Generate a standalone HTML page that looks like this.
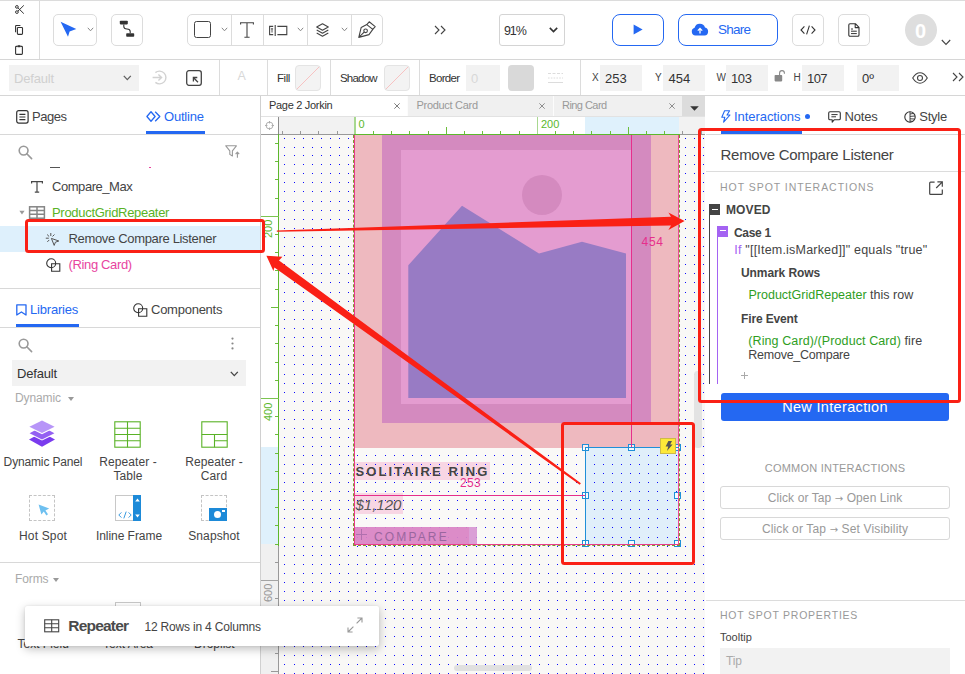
<!DOCTYPE html>
<html>
<head>
<meta charset="utf-8">
<title>Axure RP - Remove Compare Listener</title>
<style>
*{box-sizing:border-box;margin:0;padding:0}
html,body{width:965px;height:674px;overflow:hidden;background:#fff}
body{font-family:"Liberation Sans",sans-serif;font-size:13px;color:#333;position:relative}
.a{position:absolute}
.t{position:absolute;white-space:nowrap;line-height:1}
svg{position:absolute;overflow:visible}
/* top toolbar */
#top{left:0;top:0;width:965px;height:60px;background:#fff;border-top:1px solid #dcdcdc;border-bottom:1px solid #d6d6d6}
#bar2{left:0;top:60px;width:965px;height:36px;background:#fff;border-bottom:1px solid #d6d6d6}
.btn{position:absolute;border:1px solid #dcdcdc;border-radius:5px;background:#fff}
.vd{position:absolute;width:1px;background:#dcdcdc}
.inp{position:absolute;background:#f2f2f2;height:26px;top:65px}
.sw{top:65px;width:26px;height:26px;background:#f3f3f3 linear-gradient(to bottom right,transparent calc(50% - 0.55px),#f7c2c2 calc(50% - 0.55px),#f7c2c2 calc(50% + 0.55px),transparent calc(50% + 0.55px));border:1px solid #e4e4e4;border-radius:4px}
.vl{font-size:11px;transform-origin:0 0;transform:rotate(-90deg)}
.h{position:absolute;width:7px;height:7px;background:rgba(255,255,255,.75);border:1px solid #1f8fd8}
#surf{background:#f9f8f6}
.rr{border:3px solid #fa2015;border-radius:3.5px}
.ar{font-family:"DejaVu Sans",sans-serif;font-size:10px;letter-spacing:0}
/* left */
#left{left:0;top:96px;width:261px;height:578px;background:#fff;border-right:1px solid #d0d0d0}
/* canvas */
#cv{left:261px;top:96px;width:444px;height:578px;background:#f9f7f6;overflow:hidden}
/* right */
#right{left:704.4px;top:96px;width:260.6px;height:578px;background:#fff;border-left:1px solid #e6e6e6}
</style>
</head>
<body>
<div id="top" class="a"></div>
<div id="bar2" class="a"></div>
<div id="left" class="a"></div>
<div id="cv" class="a"></div>
<div id="right" class="a"></div>
<!-- top toolbar contents -->
<svg style="left:15px;top:5px" width="9" height="9" viewBox="0 0 9 9" fill="none" stroke="#333" stroke-width="1"><circle cx="1.9" cy="1.9" r="1.35"/><circle cx="1.9" cy="7.1" r="1.35"/><path d="M2.9 2.8 L8.8 8.6 M2.9 6.2 L8.8 0.4"/></svg>
<svg style="left:15px;top:25px" width="8" height="10" viewBox="0 0 8 10" fill="none" stroke="#333" stroke-width="1.1"><rect x="2.4" y="2.5" width="5.1" height="6.9" rx="0.8"/><path d="M0.6 7.2 V1.2 Q0.6 0.55 1.2 0.55 H5.4"/></svg>
<svg style="left:15px;top:45px" width="8" height="10" viewBox="0 0 8 10" fill="none" stroke="#333" stroke-width="1.1"><path d="M2.4 1.4 H1.4 Q0.6 1.4 0.6 2.2 V8.6 Q0.6 9.4 1.4 9.4 H6.6 Q7.4 9.4 7.4 8.6 V2.2 Q7.4 1.4 6.6 1.4 H5.6"/><path d="M2.6 1.9 V1 Q2.6 0.5 3.1 0.5 H4.9 Q5.4 0.5 5.4 1 V1.9 Z" fill="#333" stroke-width="0.6"/></svg>
<div class="vd" style="left:39px;top:1px;height:58px"></div>
<div class="btn" style="left:53px;top:14px;width:44px;height:32px"></div>
<svg style="left:60px;top:21px" width="17" height="17" viewBox="0 0 17 17"><path d="M0.6 0.7 L16.3 8 L9.6 10.5 L8 15.8 Z" fill="#2468f2"/></svg>
<svg style="left:87px;top:27px" width="7" height="5" viewBox="0 0 7 5" fill="none" stroke="#888" stroke-width="1"><path d="M0.8 0.8 L3.5 3.8 L6.2 0.8"/></svg>
<div class="btn" style="left:111px;top:14px;width:32px;height:32px"></div>
<svg style="left:119px;top:20px" width="16" height="18" viewBox="0 0 16 18"><rect x="0.8" y="0.8" width="8" height="3.6" rx="0.8" fill="#333"/><rect x="7.2" y="13.2" width="8" height="3.6" rx="0.8" fill="#333"/><path d="M4.8 4.4 V6.5 Q4.8 9 8 9 Q11.2 9 11.2 11.4 V13.2" fill="none" stroke="#333" stroke-width="1.1"/></svg>
<div class="btn" style="left:187px;top:14px;width:196px;height:32px"></div>
<div class="vd" style="left:231px;top:15px;height:30px"></div>
<div class="vd" style="left:263px;top:15px;height:30px"></div>
<div class="vd" style="left:307px;top:15px;height:30px"></div>
<div class="vd" style="left:351px;top:15px;height:30px"></div>
<div class="a" style="left:194px;top:21px;width:17px;height:17px;border:1.5px solid #444;border-radius:2.5px"></div>
<svg style="left:221px;top:27px" width="7" height="5" viewBox="0 0 7 5" fill="none" stroke="#888" stroke-width="1"><path d="M0.8 0.8 L3.5 3.8 L6.2 0.8"/></svg>
<svg style="left:240px;top:22px" width="14" height="16" viewBox="0 0 14 16" fill="none" stroke="#444" stroke-width="1.1"><path d="M0.6 2.6 V0.7 H13.4 V2.6 M7 0.7 V15.2 M4.4 15.3 H9.6"/></svg>
<svg style="left:269px;top:25px" width="19" height="11" viewBox="0 0 19 11" fill="none" stroke="#444" stroke-width="1.1"><path d="M6.2 0 V11 M4.2 1.4 H0.6 V9.6 H4.2 M8.4 1.4 H17.8 V9.6 H8.4"/><path d="M1.9 3.8 H4.1 M3 3.8 V7.6" stroke-width="0.9"/></svg>
<svg style="left:297px;top:27px" width="7" height="5" viewBox="0 0 7 5" fill="none" stroke="#888" stroke-width="1"><path d="M0.8 0.8 L3.5 3.8 L6.2 0.8"/></svg>
<svg style="left:316px;top:23px" width="13" height="14" viewBox="0 0 13 14" fill="none" stroke="#444" stroke-width="1.1" stroke-linejoin="round"><path d="M6.5 0.7 L12.3 4 L6.5 7.3 L0.7 4 Z M0.7 7 L6.5 10.3 L12.3 7 M0.7 9.9 L6.5 13.2 L12.3 9.9"/></svg>
<svg style="left:341px;top:27px" width="7" height="5" viewBox="0 0 7 5" fill="none" stroke="#888" stroke-width="1"><path d="M0.8 0.8 L3.5 3.8 L6.2 0.8"/></svg>
<svg style="left:358px;top:21px" width="18" height="18" viewBox="0 0 18 18" fill="none" stroke="#444" stroke-width="1.1" stroke-linejoin="round"><path d="M11.2 0.8 L17.2 5.6 L14.8 8.4 L8.8 3.6 Z M8.8 3.6 L3.2 6.4 L0.8 16.4 L11 13.6 L14.8 8.4 M0.8 16.4 L6.4 10.8"/><circle cx="7.6" cy="9.8" r="1.8"/></svg>
<svg style="left:434px;top:25px" width="13" height="10" viewBox="0 0 13 10" fill="none" stroke="#444" stroke-width="1.1"><path d="M1 1 L5 5 L1 9 M7 1 L11 5 L7 9"/></svg>
<div class="btn" style="left:499px;top:14px;width:66px;height:32px;border-radius:3px;border-color:#d4d4d4"></div>
<div class="t" style="left:504px;top:24.5px;font-size:12.5px;letter-spacing:-1.1px;color:#333">91%</div>
<svg style="left:549px;top:27px" width="9" height="6" viewBox="0 0 9 6" fill="none" stroke="#333" stroke-width="1.6"><path d="M0.8 0.9 L4.5 4.6 L8.2 0.9"/></svg>
<div class="btn" style="left:612px;top:14px;width:52px;height:32px;border-color:#2468f2;border-radius:8px"></div>
<svg style="left:633px;top:24px" width="10" height="11" viewBox="0 0 10 11"><path d="M0.6 0.6 L9.6 5.5 L0.6 10.4 Z" fill="#2468f2"/></svg>
<div class="btn" style="left:678px;top:14px;width:100px;height:32px;border-color:#2468f2;border-radius:8px"></div>
<svg style="left:691px;top:23px" width="18" height="13" viewBox="0 0 18 13"><path d="M4.4 12.6 A4 4 0 0 1 3.6 4.8 A5.4 5.4 0 0 1 14 4.4 A4.2 4.2 0 0 1 13.6 12.6 Z" fill="#2468f2"/><path d="M9 10.4 V5.6 M6.8 7.6 L9 5.4 L11.2 7.6" fill="none" stroke="#fff" stroke-width="1.3"/></svg>
<div class="t" style="left:718px;top:22.8px;font-size:13.5px;letter-spacing:-0.75px;color:#2468f2">Share</div>
<div class="btn" style="left:792px;top:14px;width:32px;height:32px"></div>
<svg style="left:800px;top:25px" width="16" height="10" viewBox="0 0 16 10" fill="none" stroke="#333" stroke-width="1.1"><path d="M4.4 1.4 L1 5 L4.4 8.6 M11.6 1.4 L15 5 L11.6 8.6 M9.4 0.6 L6.6 9.4"/></svg>
<div class="btn" style="left:838px;top:14px;width:32px;height:32px"></div>
<svg style="left:848px;top:23px" width="12" height="14" viewBox="0 0 12 14" fill="none" stroke="#333" stroke-width="1.1" stroke-linejoin="round"><path d="M0.8 2 Q0.8 0.7 2 0.7 H7.4 L11 4.4 V12 Q11 13.3 9.8 13.3 H2 Q0.8 13.3 0.8 12 Z M7.2 0.8 V4.6 H11"/><path d="M3 6 H5 M3 8.2 H8.8 M3 10.6 H8.8" stroke-width="1"/></svg>
<div class="a" style="left:905px;top:14px;width:32px;height:32px;border-radius:50%;background:#dedede"></div>
<div class="t" style="left:915px;top:20.5px;font-size:20px;font-weight:bold;color:#fff">0</div>
<svg style="left:941px;top:39px" width="10" height="7" viewBox="0 0 10 7" fill="none" stroke="#444" stroke-width="1.1"><path d="M0.8 1 L5 5.4 L9.2 1"/></svg>

<!-- style toolbar contents -->
<div class="inp" style="left:9px;width:130px"></div>
<div class="t" style="left:14px;top:72px;font-size:13px;letter-spacing:-0.2px;color:#d0d0d0">Default</div>
<svg style="left:123px;top:75px" width="9" height="6" viewBox="0 0 9 6" fill="none" stroke="#606060" stroke-width="1.3"><path d="M0.8 0.9 L4.3 4.6 L7.8 0.9"/></svg>
<svg style="left:152px;top:70px" width="15" height="15" viewBox="0 0 15 15" fill="none" stroke="#d2d2d2" stroke-width="1.4"><path d="M3.4 2.6 A6.4 6.4 0 1 1 3.4 12.4"/><path d="M0.6 7.5 H9.4 M6.4 4.4 L9.6 7.5 L6.4 10.6"/></svg>
<svg style="left:186px;top:70px" width="16" height="16" viewBox="0 0 16 16" fill="none" stroke="#444" stroke-width="1.3"><rect x="0.7" y="0.7" width="14.6" height="14.6" rx="2.2"/><path d="M12 12.2 L7.6 7.8 M7.4 11.4 V7.5 H11.3" stroke-width="1.3"/></svg>
<div class="vd" style="left:219px;top:60px;height:35px"></div>
<div class="t" style="left:237.5px;top:69.6px;font-size:12.5px;color:#d8d8d8">A</div>
<div class="vd" style="left:267px;top:60px;height:35px"></div>
<div class="t" style="left:277px;top:72.5px;font-size:11.5px;letter-spacing:-0.45px;color:#333">Fill</div>
<div class="a sw" style="left:295px"></div>
<div class="vd" style="left:330px;top:60px;height:35px"></div>
<div class="t" style="left:340px;top:72.5px;font-size:11.5px;letter-spacing:-0.8px;color:#333">Shadow</div>
<div class="a sw" style="left:384px"></div>
<div class="vd" style="left:419px;top:60px;height:35px"></div>
<div class="t" style="left:429px;top:72.5px;font-size:11.5px;letter-spacing:-0.7px;color:#333">Border</div>
<div class="inp" style="left:466px;width:34px"></div>
<div class="t" style="left:471px;top:72px;font-size:13px;color:#d8d8d8">0</div>
<div class="a" style="left:508px;top:65px;width:26px;height:26px;background:#d9d9d9;border-radius:4px"></div>
<svg style="left:548px;top:72px" width="15" height="12" viewBox="0 0 15 12" fill="none" stroke="#dcdcdc" stroke-width="1"><path d="M0 1.5 H15" stroke-dasharray="3 1.5"/><path d="M0 6 H15" stroke-dasharray="1.6 1.2"/><path d="M0 10.5 H15"/></svg>
<div class="vd" style="left:580px;top:60px;height:35px"></div>
<div class="t" style="left:592px;top:73px;font-size:10px;color:#444">X</div>
<div class="inp" style="left:600px;width:42px"></div>
<div class="t" style="left:605px;top:72px;font-size:13px;color:#333">253</div>
<div class="t" style="left:655px;top:73px;font-size:10px;color:#444">Y</div>
<div class="inp" style="left:663px;width:42px"></div>
<div class="t" style="left:668.5px;top:72px;font-size:13px;color:#333">454</div>
<div class="t" style="left:716.5px;top:73px;font-size:10px;color:#444">W</div>
<div class="inp" style="left:726px;width:42px"></div>
<div class="t" style="left:731px;top:72px;font-size:13px;letter-spacing:-0.4px;color:#333">103</div>
<svg style="left:774px;top:70px" width="12" height="12" viewBox="0 0 12 12"><rect x="0.6" y="5" width="7.6" height="6.4" rx="0.8" fill="#888"/><path d="M5.6 5 V3 A2.4 2.4 0 0 1 10.4 3 V3.8" fill="none" stroke="#888" stroke-width="1.1"/></svg>
<div class="t" style="left:793.5px;top:73px;font-size:10px;color:#444">H</div>
<div class="inp" style="left:802px;width:42px"></div>
<div class="t" style="left:807px;top:72px;font-size:13px;letter-spacing:-0.6px;color:#333">107</div>
<div class="inp" style="left:857px;width:42px"></div>
<div class="t" style="left:862px;top:72px;font-size:13px;color:#333">0º</div>
<svg style="left:912px;top:72px" width="16" height="12" viewBox="0 0 16 12" fill="none" stroke="#444" stroke-width="1.1"><path d="M0.7 6 Q4 0.8 8 0.8 Q12 0.8 15.3 6 Q12 11.2 8 11.2 Q4 11.2 0.7 6 Z"/><circle cx="8" cy="6" r="2.5"/></svg>
<svg style="left:952px;top:72px" width="13" height="10" viewBox="0 0 13 10" fill="none" stroke="#444" stroke-width="1.1"><path d="M1 1 L5 5 L1 9 M7 1 L11 5 L7 9"/></svg>

<!-- left panel: pages/outline -->
<svg style="left:16px;top:110px" width="13" height="14" viewBox="0 0 13 14" fill="none" stroke="#333" stroke-width="1.2"><rect x="0.7" y="0.7" width="11.4" height="12.4" rx="2"/><path d="M3.4 4.4 H9.4 M3.4 7 H9.4 M3.4 9.6 H9.4" stroke-width="1.1"/></svg>
<div class="t" style="left:32px;top:110px;font-size:13px;letter-spacing:-0.45px;color:#444">Pages</div>
<svg style="left:146px;top:111px" width="15" height="11" viewBox="0 0 15 11" fill="none" stroke="#2468f2" stroke-width="1.3" stroke-linejoin="round"><path d="M5 0.8 L0.9 5.5 L5 10.2 L9.1 5.5 Z"/><path d="M9.2 0.8 L13.8 5.5 L9.2 10.2"/></svg>
<div class="t" style="left:164px;top:110px;font-size:13px;letter-spacing:-0.2px;color:#2468f2">Outline</div>
<div class="a" style="left:0;top:134px;width:260px;height:1px;background:#d8d8d8"></div>
<div class="a" style="left:146px;top:131px;width:59px;height:3px;background:#2468f2"></div>
<svg style="left:18px;top:145px" width="15" height="15" viewBox="0 0 15 15" fill="none" stroke="#999" stroke-width="1.6"><circle cx="5.6" cy="5.6" r="4.4"/><path d="M8.8 8.8 L13.6 13.6" stroke-linecap="round"/></svg>
<svg style="left:225px;top:145px" width="16" height="14" viewBox="0 0 16 14" fill="none" stroke="#999" stroke-width="1.1" stroke-linejoin="round"><path d="M0.8 0.8 H11.4 L7.4 5.8 V11 L4.8 9.4 V5.8 Z"/><path d="M12.4 12.8 V7.4 M10.6 9.2 L12.4 7.2 L14.2 9.2"/></svg>
<div class="a" style="left:50px;top:167px;width:10px;height:1px;background:#555"></div>
<div class="a" style="left:149px;top:167px;width:2px;height:1px;background:#e8449f"></div>
<!-- Compare_Max -->
<svg style="left:31px;top:181px" width="12" height="12" viewBox="0 0 12 12" fill="none" stroke="#484848" stroke-width="1.2"><path d="M0.6 2.4 V0.6 H11.4 V2.4 M6 0.6 V11 M3.8 11.2 H8.2"/></svg>
<div class="t" style="left:52px;top:180px;font-size:13px;letter-spacing:-0.45px;color:#444">Compare_Max</div>
<!-- ProductGridRepeater -->
<svg style="left:19px;top:210px" width="6" height="5" viewBox="0 0 6 5"><path d="M0.4 0.8 H5.6 L3 4.4 Z" fill="#999"/></svg>
<svg style="left:29px;top:206px" width="16" height="13" viewBox="0 0 16 13" fill="none" stroke="#858585" stroke-width="1.5"><rect x="0.6" y="0.8" width="14.8" height="11.4"/><path d="M0.6 4.4 H15.4 M0.6 8.2 H15.4 M8 0.8 V12.2"/></svg>
<div class="t" style="left:52px;top:206px;font-size:13px;letter-spacing:-0.3px;color:#59b226">ProductGridRepeater</div>
<!-- selected row -->
<div class="a" style="left:0;top:226px;width:260px;height:26px;background:#def0fc"></div>
<svg style="left:46px;top:233px" width="14" height="13" viewBox="0 0 14 13" fill="none" stroke="#555" stroke-width="1" stroke-linejoin="round"><path d="M5.4 5.4 L12.8 8 L9.4 9.2 L8.2 12.4 Z"/><path d="M4.8 0.4 V2.6 M1.4 1.8 L2.9 3.3 M0.2 5.2 H2.4 M8.2 1.8 L6.8 3.2 M1.6 8.6 L3 7.2" stroke-linecap="round"/></svg>
<div class="t" style="left:68.5px;top:232px;font-size:13px;letter-spacing:-0.33px;color:#444">Remove Compare Listener</div>
<!-- Ring Card -->
<svg style="left:46px;top:258px" width="15" height="14" viewBox="0 0 15 14" fill="none" stroke="#333" stroke-width="1.1"><circle cx="5.2" cy="5.2" r="4.5"/><path d="M5.6 5.8 H13.8 V13.2 H5.6 Z" fill="none"/></svg>
<div class="t" style="left:68.5px;top:258px;font-size:13px;letter-spacing:-0.35px;color:#e8449f">(Ring Card)</div>
<div class="a" style="left:0;top:288px;width:260px;height:1px;background:#d8d8d8"></div>
<!-- libraries tabs -->
<svg style="left:16px;top:304px" width="11" height="12" viewBox="0 0 11 12" fill="none" stroke="#2468f2" stroke-width="1.3" stroke-linejoin="round"><path d="M0.8 0.8 H10 V11 L5.4 8 L0.8 11 Z"/></svg>
<div class="t" style="left:30px;top:303px;font-size:13px;letter-spacing:-0.2px;color:#2468f2">Libraries</div>
<svg style="left:133px;top:303px" width="15" height="14" viewBox="0 0 15 14" fill="none" stroke="#333" stroke-width="1.1"><circle cx="5.2" cy="5.2" r="4.5"/><path d="M5.6 5.8 H13.8 V13.2 H5.6 Z"/></svg>
<div class="t" style="left:151px;top:303px;font-size:13px;letter-spacing:-0.25px;color:#444">Components</div>
<div class="a" style="left:0;top:327px;width:260px;height:1px;background:#d8d8d8"></div>
<div class="a" style="left:16px;top:324px;width:63px;height:3px;background:#2468f2"></div>
<svg style="left:18px;top:338px" width="15" height="15" viewBox="0 0 15 15" fill="none" stroke="#999" stroke-width="1.6"><circle cx="5.6" cy="5.6" r="4.4"/><path d="M8.8 8.8 L13.6 13.6" stroke-linecap="round"/></svg>
<svg style="left:231px;top:337px" width="3" height="13" viewBox="0 0 3 13" fill="#888"><circle cx="1.5" cy="1.6" r="1.1"/><circle cx="1.5" cy="6.5" r="1.1"/><circle cx="1.5" cy="11.4" r="1.1"/></svg>
<div class="a" style="left:12px;top:360px;width:234px;height:26px;background:#f2f2f2"></div>
<div class="t" style="left:17px;top:367px;font-size:13px;letter-spacing:-0.2px;color:#333">Default</div>
<svg style="left:229.5px;top:370.5px" width="9" height="6" viewBox="0 0 9 6" fill="none" stroke="#444" stroke-width="1.35"><path d="M0.8 0.9 L4.3 4.6 L7.8 0.9"/></svg>
<div class="t" style="left:15px;top:392px;font-size:12px;letter-spacing:-0.1px;color:#aaa">Dynamic</div>
<svg style="left:67.5px;top:396.5px" width="6" height="4" viewBox="0 0 6 4"><path d="M0 0 H6 L3 4 Z" fill="#999"/></svg>
<!-- widget icons row 1 -->
<svg style="left:28px;top:420px" width="28" height="28" viewBox="0 0 28 28"><path d="M14 12.6 L27 19.6 L14 26.8 L1 19.6 Z" fill="#7a3bee"/><path d="M14 7.8 L27 14.2 L14 20.6 L1 14.2 Z" fill="#fff"/><path d="M14 6.6 L26.4 13.2 L14 19.4 L1.6 13.2 Z" fill="#9460f2"/><path d="M14 1.6 L27 7.8 L14 14.2 L1 7.8 Z" fill="#fff"/><path d="M14 0.4 L26.6 6.8 L14 13 L1.4 6.8 Z" fill="#b795f8"/></svg>
<div class="t" style="left:3px;top:456px;width:80px;text-align:center;font-size:12px;letter-spacing:-0.15px;color:#444">Dynamic Panel</div>
<svg style="left:114px;top:421px" width="27" height="27" viewBox="0 0 27 27" fill="none" stroke="#59b226" stroke-width="1.1"><rect x="0.8" y="0.8" width="25.4" height="25.4"/><path d="M0.8 7.2 H26.2 M0.8 13.5 H26.2 M0.8 19.8 H26.2 M13.5 0.8 V26.2"/></svg>
<div class="t" style="left:88px;top:456px;width:80px;text-align:center;font-size:12px;letter-spacing:0.1px;color:#444;line-height:14px;margin-top:-1px">Repeater -<br>Table</div>
<svg style="left:200.5px;top:421px" width="27" height="27" viewBox="0 0 27 27" fill="none" stroke="#59b226" stroke-width="1.1"><rect x="0.8" y="0.8" width="25.4" height="25.4"/><path d="M0.8 13.5 H26.2 M13.5 13.5 V26.2 M13.5 19.8 H26.2"/></svg>
<div class="t" style="left:174px;top:456px;width:80px;text-align:center;font-size:12px;letter-spacing:0.1px;color:#444;line-height:14px;margin-top:-1px">Repeater -<br>Card</div>
<!-- widget icons row 2 -->
<div class="a" style="left:29px;top:495px;width:26px;height:26px;border:1px dashed #c4c4c4"></div>
<svg style="left:38px;top:504px" width="12" height="12" viewBox="0 0 12 12"><path d="M0.6 0.6 L11.2 4.6 L7.4 6.4 L10 10.2 L8.4 11.4 L5.8 7.6 L3.4 10.6 Z" fill="#6ec0f0"/></svg>
<div class="t" style="left:3px;top:530px;width:80px;text-align:center;font-size:12px;letter-spacing:0.15px;color:#444">Hot Spot</div>
<div class="a" style="left:115px;top:495px;width:26px;height:26px;border:1px solid #c8c8c8;background:#fff"></div>
<div class="a" style="left:133px;top:495px;width:8px;height:26px;background:#1d8ad8"></div>
<svg style="left:134.5px;top:498px" width="5" height="20" viewBox="0 0 5 20" fill="#fff"><path d="M2.5 0.6 L4.8 3.6 H0.2 Z M2.5 19.4 L4.8 16.4 H0.2 Z"/></svg>
<svg style="left:117.5px;top:511px" width="14" height="8" viewBox="0 0 14 8" fill="none" stroke="#3a9be0" stroke-width="1"><path d="M3.4 1.4 L0.8 4 L3.4 6.6 M10.6 1.4 L13.2 4 L10.6 6.6 M8.2 0.6 L5.8 7.4"/></svg>
<div class="t" style="left:88px;top:530px;width:82px;text-align:center;font-size:12px;letter-spacing:-0.05px;color:#444">Inline Frame</div>
<div class="a" style="left:201px;top:495px;width:26px;height:26px;border:1px dashed #c4c4c4"></div>
<div class="a" style="left:209px;top:508px;width:18px;height:13px;background:#1d8ad8"></div>
<div class="a" style="left:214px;top:511px;width:7px;height:7px;border-radius:50%;background:#fff"></div>
<div class="a" style="left:222px;top:509.5px;width:2.5px;height:2px;background:#fff"></div>
<div class="t" style="left:174px;top:530px;width:80px;text-align:center;font-size:12px;letter-spacing:0.1px;color:#444">Snapshot</div>
<div class="a" style="left:0;top:562px;width:260px;height:1px;background:#d8d8d8"></div>
<div class="t" style="left:15px;top:573px;font-size:12px;letter-spacing:-0.1px;color:#aaa">Forms</div>
<svg style="left:53px;top:577.5px" width="6" height="4" viewBox="0 0 6 4"><path d="M0 0 H6 L3 4 Z" fill="#999"/></svg>
<!-- forms widgets (mostly hidden behind tooltip) -->
<div class="a" style="left:115px;top:602px;width:26px;height:14px;border:1px solid #c8c8c8;border-bottom:none"></div>
<div class="t" style="left:17.5px;top:638px;font-size:12px;color:#444">Text Field</div>
<div class="t" style="left:103px;top:638px;font-size:12px;color:#444">Text Area</div>
<div class="t" style="left:194px;top:638px;font-size:12px;color:#444">Droplist</div>

<!-- canvas: tabs -->
<div class="a" style="left:261px;top:96px;width:444px;height:21px;background:#f0f0f0"></div>
<div class="a" style="left:261px;top:96px;width:146px;height:21px;background:#fff"></div>
<div class="a" style="left:407px;top:96px;width:1px;height:21px;background:#fcfcfc"></div>
<div class="a" style="left:553px;top:96px;width:1px;height:21px;background:#fcfcfc"></div>
<div class="a" style="left:682px;top:96px;width:23px;height:21px;background:#dcdcdc"></div>
<div class="a" style="left:261px;top:116px;width:444px;height:1px;background:#e2e2e2"></div>
<div class="t" style="left:269px;top:100px;font-size:11px;letter-spacing:-0.3px;color:#333">Page 2 Jorkin</div>
<div class="t" style="left:416.5px;top:100px;font-size:11px;letter-spacing:-0.3px;color:#999">Product Card</div>
<div class="t" style="left:562px;top:100px;font-size:11px;letter-spacing:-0.55px;color:#999">Ring Card</div>
<svg style="left:393.5px;top:103px" width="6" height="6" viewBox="0 0 7 7" stroke="#777" stroke-width="1.1"><path d="M0.4 0.4 L6.6 6.6 M6.6 0.4 L0.4 6.6"/></svg>
<svg style="left:539px;top:103px" width="6" height="6" viewBox="0 0 7 7" stroke="#888" stroke-width="1.1"><path d="M0.4 0.4 L6.6 6.6 M6.6 0.4 L0.4 6.6"/></svg>
<svg style="left:668.5px;top:103px" width="6" height="6" viewBox="0 0 7 7" stroke="#888" stroke-width="1.1"><path d="M0.4 0.4 L6.6 6.6 M6.6 0.4 L0.4 6.6"/></svg>
<svg style="left:690px;top:106px" width="9" height="5" viewBox="0 0 9 5"><path d="M0.2 0.2 H8.8 L4.5 4.8 Z" fill="#333"/></svg>
<!-- rulers -->
<div class="a" style="left:261px;top:117px;width:444px;height:18px;background:#f2f2f2"></div>
<div class="a" style="left:261px;top:117px;width:18px;height:18px;background:#fff"></div>
<div class="a" style="left:354px;top:117px;width:231px;height:18px;background:#fff"></div>
<div class="a" style="left:585px;top:117px;width:93.5px;height:18px;background:#dff1fc"></div>
<div class="a" style="left:261px;top:135px;width:18px;height:539px;background:#fff"></div>
<div class="a" style="left:261px;top:447px;width:18px;height:96.5px;background:#dff1fc"></div>
<div class="a" style="left:261px;top:543.5px;width:18px;height:131px;background:#f0f0f0"></div>
<svg style="left:265px;top:121px" width="9" height="9" viewBox="0 0 11 11" fill="none" stroke="#a8a8a8" stroke-width="1.1"><circle cx="5.5" cy="5.5" r="4.2"/><path d="M5.5 0 V3 M5.5 8 V11 M0 5.5 H3 M8 5.5 H11"/></svg>
<div class="a" style="left:278.3px;top:117px;width:1.2px;height:18px;background:#8c8c8c"></div>
<div class="a" style="left:261px;top:134px;width:444px;height:1px;background:#999"></div>
<div class="a" style="left:278.3px;top:134px;width:1.2px;height:540px;background:#999"></div>
<div class="a" style="left:353.5px;top:117px;width:2px;height:18px;background:#a8d890"></div>
<div class="a" style="left:536.5px;top:117px;width:1.5px;height:18px;background:#a8d890"></div>
<div class="a" style="left:354px;top:133.5px;width:325.5px;height:1.5px;background:#5cb82c"></div>
<div class="a" style="left:278.3px;top:134px;width:1.2px;height:412px;background:#5cb82c"></div>
<div class="a" style="left:261px;top:215.5px;width:18px;height:1.5px;background:#7cc450"></div>
<div class="a" style="left:261px;top:397.7px;width:18px;height:1.5px;background:#7cc450"></div>
<div class="a" style="left:261px;top:580px;width:18px;height:1.2px;background:#a4a4a4"></div>
<div class="a" style="left:281.9px;top:130.6px;width:1px;height:3.4px;background:#999"></div>
<div class="a" style="left:300.1px;top:130.6px;width:1px;height:3.4px;background:#999"></div>
<div class="a" style="left:318.3px;top:130.6px;width:1px;height:3.4px;background:#999"></div>
<div class="a" style="left:336.5px;top:130.6px;width:1px;height:3.4px;background:#999"></div>
<div class="a" style="left:372.9px;top:130.6px;width:1px;height:3.4px;background:#6cbd3c"></div>
<div class="a" style="left:391.1px;top:130.6px;width:1px;height:3.4px;background:#6cbd3c"></div>
<div class="a" style="left:409.3px;top:130.6px;width:1px;height:3.4px;background:#6cbd3c"></div>
<div class="a" style="left:427.5px;top:130.6px;width:1px;height:3.4px;background:#6cbd3c"></div>
<div class="a" style="left:445.7px;top:127px;width:1px;height:7px;background:#6cbd3c"></div>
<div class="a" style="left:463.9px;top:130.6px;width:1px;height:3.4px;background:#6cbd3c"></div>
<div class="a" style="left:482.1px;top:130.6px;width:1px;height:3.4px;background:#6cbd3c"></div>
<div class="a" style="left:500.3px;top:130.6px;width:1px;height:3.4px;background:#6cbd3c"></div>
<div class="a" style="left:518.5px;top:130.6px;width:1px;height:3.4px;background:#6cbd3c"></div>
<div class="a" style="left:554.9px;top:130.6px;width:1px;height:3.4px;background:#6cbd3c"></div>
<div class="a" style="left:573.1px;top:130.6px;width:1px;height:3.4px;background:#6cbd3c"></div>
<div class="a" style="left:591.3px;top:130.6px;width:1px;height:3.4px;background:#6cbd3c"></div>
<div class="a" style="left:609.5px;top:130.6px;width:1px;height:3.4px;background:#6cbd3c"></div>
<div class="a" style="left:627.7px;top:127px;width:1px;height:7px;background:#6cbd3c"></div>
<div class="a" style="left:645.9px;top:130.6px;width:1px;height:3.4px;background:#6cbd3c"></div>
<div class="a" style="left:664.1px;top:130.6px;width:1px;height:3.4px;background:#6cbd3c"></div>
<div class="a" style="left:682.3px;top:130.6px;width:1px;height:3.4px;background:#999"></div>
<div class="a" style="left:700.5px;top:130.6px;width:1px;height:3.4px;background:#999"></div>
<div class="a" style="left:274.6px;top:142.8px;width:3.4px;height:1px;background:#6cbd3c"></div>
<div class="a" style="left:274.6px;top:161.0px;width:3.4px;height:1px;background:#6cbd3c"></div>
<div class="a" style="left:274.6px;top:179.3px;width:3.4px;height:1px;background:#6cbd3c"></div>
<div class="a" style="left:274.6px;top:197.5px;width:3.4px;height:1px;background:#6cbd3c"></div>
<div class="a" style="left:274.6px;top:233.9px;width:3.4px;height:1px;background:#6cbd3c"></div>
<div class="a" style="left:274.6px;top:252.1px;width:3.4px;height:1px;background:#6cbd3c"></div>
<div class="a" style="left:274.6px;top:270.4px;width:3.4px;height:1px;background:#6cbd3c"></div>
<div class="a" style="left:274.6px;top:288.6px;width:3.4px;height:1px;background:#6cbd3c"></div>
<div class="a" style="left:271px;top:306.8px;width:7px;height:1px;background:#6cbd3c"></div>
<div class="a" style="left:274.6px;top:325.0px;width:3.4px;height:1px;background:#6cbd3c"></div>
<div class="a" style="left:274.6px;top:343.2px;width:3.4px;height:1px;background:#6cbd3c"></div>
<div class="a" style="left:274.6px;top:361.5px;width:3.4px;height:1px;background:#6cbd3c"></div>
<div class="a" style="left:274.6px;top:379.7px;width:3.4px;height:1px;background:#6cbd3c"></div>
<div class="a" style="left:274.6px;top:416.1px;width:3.4px;height:1px;background:#6cbd3c"></div>
<div class="a" style="left:274.6px;top:434.3px;width:3.4px;height:1px;background:#6cbd3c"></div>
<div class="a" style="left:274.6px;top:452.6px;width:3.4px;height:1px;background:#6cbd3c"></div>
<div class="a" style="left:274.6px;top:470.8px;width:3.4px;height:1px;background:#6cbd3c"></div>
<div class="a" style="left:271px;top:489.0px;width:7px;height:1px;background:#6cbd3c"></div>
<div class="a" style="left:274.6px;top:507.2px;width:3.4px;height:1px;background:#6cbd3c"></div>
<div class="a" style="left:274.6px;top:525.4px;width:3.4px;height:1px;background:#6cbd3c"></div>
<div class="a" style="left:274.6px;top:543.7px;width:3.4px;height:1px;background:#6cbd3c"></div>
<div class="a" style="left:274.6px;top:561.9px;width:3.4px;height:1px;background:#999"></div>
<div class="a" style="left:274.6px;top:598.3px;width:3.4px;height:1px;background:#999"></div>
<div class="a" style="left:274.6px;top:616.5px;width:3.4px;height:1px;background:#999"></div>
<div class="a" style="left:274.6px;top:634.8px;width:3.4px;height:1px;background:#999"></div>
<div class="a" style="left:274.6px;top:653.0px;width:3.4px;height:1px;background:#999"></div>
<div class="a" style="left:271px;top:671.2px;width:7px;height:1px;background:#999"></div>
<div class="t" style="left:358.5px;top:119px;font-size:11px;color:#5cb82c">0</div>
<div class="t" style="left:541px;top:119px;font-size:11px;color:#5cb82c">200</div>
<div class="t vl" style="left:263px;top:238px;color:#5cb82c">200</div>
<div class="t vl" style="left:263px;top:421px;color:#5cb82c">400</div>
<div class="t vl" style="left:263px;top:602px;color:#999">600</div>
<!-- canvas surface -->
<div class="a" id="surf" style="left:280px;top:135px;width:425px;height:539px"></div>
<div class="a" style="left:355px;top:447px;width:324px;height:98px;background:#faf9f7"></div>
<div class="a" style="left:355px;top:462px;width:135px;height:17.5px;background:#f8d6e4"></div>
<div class="a" style="left:355px;top:493px;width:47.5px;height:20.5px;background:#f8d6e4"></div>
<div class="a" style="left:585px;top:447px;width:93px;height:96.5px;background:#e0effa"></div>
<svg style="left:0;top:0" width="965" height="674" viewBox="0 0 965 674" shape-rendering="crispEdges"><defs><g id="dr" fill="#0a0aff"><rect x="284" width="1" height="1"/><rect x="294" width="1" height="1"/><rect x="303" width="1" height="1"/><rect x="312" width="1" height="1"/><rect x="321" width="1" height="1"/><rect x="330" width="1" height="1"/><rect x="339" width="1" height="1"/><rect x="348" width="1" height="1"/><rect x="357" width="1" height="1"/><rect x="366" width="1" height="1"/><rect x="375" width="1" height="1"/><rect x="385" width="1" height="1"/><rect x="394" width="1" height="1"/><rect x="403" width="1" height="1"/><rect x="412" width="1" height="1"/><rect x="421" width="1" height="1"/><rect x="430" width="1" height="1"/><rect x="439" width="1" height="1"/><rect x="448" width="1" height="1"/><rect x="457" width="1" height="1"/><rect x="466" width="1" height="1"/><rect x="476" width="1" height="1"/><rect x="485" width="1" height="1"/><rect x="494" width="1" height="1"/><rect x="503" width="1" height="1"/><rect x="512" width="1" height="1"/><rect x="521" width="1" height="1"/><rect x="530" width="1" height="1"/><rect x="539" width="1" height="1"/><rect x="548" width="1" height="1"/><rect x="557" width="1" height="1"/><rect x="566" width="1" height="1"/><rect x="576" width="1" height="1"/><rect x="585" width="1" height="1"/><rect x="594" width="1" height="1"/><rect x="603" width="1" height="1"/><rect x="612" width="1" height="1"/><rect x="621" width="1" height="1"/><rect x="630" width="1" height="1"/><rect x="639" width="1" height="1"/><rect x="648" width="1" height="1"/><rect x="657" width="1" height="1"/><rect x="667" width="1" height="1"/><rect x="676" width="1" height="1"/><rect x="685" width="1" height="1"/><rect x="694" width="1" height="1"/><rect x="703" width="1" height="1"/></g></defs><use href="#dr" y="138"/><use href="#dr" y="147"/><use href="#dr" y="155"/><use href="#dr" y="164"/><use href="#dr" y="173"/><use href="#dr" y="182"/><use href="#dr" y="191"/><use href="#dr" y="201"/><use href="#dr" y="210"/><use href="#dr" y="219"/><use href="#dr" y="228"/><use href="#dr" y="237"/><use href="#dr" y="246"/><use href="#dr" y="255"/><use href="#dr" y="264"/><use href="#dr" y="273"/><use href="#dr" y="282"/><use href="#dr" y="292"/><use href="#dr" y="301"/><use href="#dr" y="310"/><use href="#dr" y="319"/><use href="#dr" y="328"/><use href="#dr" y="337"/><use href="#dr" y="346"/><use href="#dr" y="355"/><use href="#dr" y="364"/><use href="#dr" y="374"/><use href="#dr" y="383"/><use href="#dr" y="392"/><use href="#dr" y="401"/><use href="#dr" y="410"/><use href="#dr" y="419"/><use href="#dr" y="428"/><use href="#dr" y="437"/><use href="#dr" y="446"/><use href="#dr" y="455"/><use href="#dr" y="464"/><use href="#dr" y="473"/><use href="#dr" y="482"/><use href="#dr" y="491"/><use href="#dr" y="500"/><use href="#dr" y="509"/><use href="#dr" y="518"/><use href="#dr" y="527"/><use href="#dr" y="537"/><use href="#dr" y="546"/><use href="#dr" y="555"/><use href="#dr" y="564"/><use href="#dr" y="573"/><use href="#dr" y="582"/><use href="#dr" y="591"/><use href="#dr" y="600"/><use href="#dr" y="609"/><use href="#dr" y="618"/><use href="#dr" y="627"/><use href="#dr" y="636"/><use href="#dr" y="646"/><use href="#dr" y="655"/><use href="#dr" y="664"/><use href="#dr" y="673"/></svg>
<!-- card -->
<div class="a" style="left:355px;top:135px;width:323px;height:312.5px;background:#eeb9bf"></div>
<div class="a" style="left:382px;top:135px;width:269px;height:287.5px;background:#d48abf"></div>
<div class="a" style="left:401px;top:150px;width:231px;height:253.5px;background:#e49cd0"></div>
<div class="a" style="left:521.5px;top:174.5px;width:40px;height:40px;border-radius:50%;background:#d48abf"></div>
<svg style="left:0;top:0" width="965" height="674" viewBox="0 0 965 674"><path d="M408.3 265.2 L462 205.8 L539 253.4 L582 241.8 L626 253.4 V398 H408.3 Z" fill="#987bc4"/></svg>
<div class="h" style="left:582px;top:444px"></div><div class="h" style="left:628px;top:444px"></div><div class="h" style="left:674px;top:444px"></div>
<div class="h" style="left:582px;top:492px"></div><div class="h" style="left:674px;top:492px"></div>
<div class="h" style="left:582px;top:540px"></div><div class="h" style="left:628px;top:540px"></div><div class="h" style="left:674px;top:540px"></div>
<!-- card guides -->
<div class="a" style="left:353px;top:135px;width:0;height:411px;border-left:1px dashed #7a9a2c"></div>
<div class="a" style="left:354.2px;top:135px;width:1.2px;height:410px;background:#ea3a8c"></div>
<div class="a" style="left:679px;top:135px;width:0;height:411px;border-left:1px dashed #7a9a2c"></div>
<div class="a" style="left:678px;top:135px;width:1px;height:410px;background:#ee4a98"></div>
<div class="a" style="left:353px;top:545px;width:326.5px;height:0;border-top:1px dashed #7a9a2c"></div>
<div class="a" style="left:354.2px;top:543.5px;width:324.8px;height:1.2px;background:#ea3a8c"></div>
<div class="a" style="left:631.1px;top:135px;width:1px;height:312px;background:#e62f8c"></div>
<div class="a" style="left:355px;top:495px;width:230px;height:1px;background:#e62f8c"></div>
<!-- card texts -->
<div class="a" style="left:355px;top:527px;width:121.5px;height:17px;background:rgba(211,143,208,.85)"></div>
<div class="a" style="left:355px;top:527px;width:114px;height:17px;background:rgba(222,124,190,.55)"></div>
<div class="t" style="left:355.5px;top:464.5px;font-size:13px;font-weight:bold;letter-spacing:2.1px;color:#444">SOLITAIRE RING</div>
<div class="t" style="left:355.5px;top:497px;font-size:15px;font-style:italic;color:#555">$1,120</div>
<svg style="left:356px;top:528.5px" width="11" height="11" viewBox="0 0 11 11" stroke="#b070ae" stroke-width="1"><path d="M5.5 0 V11 M0 5.5 H11"/></svg>
<div class="t" style="left:374px;top:531px;font-size:12px;letter-spacing:2.15px;color:#9a669e">COMPARE</div>
<div class="t" style="left:641.6px;top:235.5px;font-size:12px;letter-spacing:0.7px;color:#e62f8c">454</div>
<div class="t" style="left:460px;top:476.5px;font-size:12px;letter-spacing:0.35px;color:#e62f8c">253</div>
<!-- hot spot selection -->
<div class="a" style="left:584.5px;top:446.5px;width:94px;height:98px;border-left:1px solid #1f8fd8;border-top:1px solid #1f8fd8"></div>
<div class="a" style="left:660px;top:438px;width:16px;height:16px;background:#fde838;border:1px solid #cdbb48"></div>
<svg style="left:664.5px;top:441px" width="8" height="10" viewBox="0 0 8 10"><path d="M3.4 0 H7 L5.2 3.4 H7.6 L2 10 L3.2 5.4 H0.6 Z" fill="#555"/></svg>
<!-- scrollbars -->
<div class="a" style="left:694.3px;top:370.5px;width:7.7px;height:77px;background:#e3e3e3;border-radius:3.5px"></div>
<div class="a" style="left:454px;top:665px;width:78px;height:6px;background:#e0e0e0;border-radius:3px"></div>

<!-- right panel -->
<svg style="left:721px;top:110px" width="10" height="13" viewBox="0 0 10 13" fill="none" stroke="#2468f2" stroke-width="1.1" stroke-linejoin="round"><path d="M3.6 0.7 H8.6 L6 5 H9 L2.6 12.2 L3.8 7.2 H0.8 Z"/></svg>
<div class="t" style="left:734px;top:110.3px;font-size:13px;letter-spacing:-0.06px;color:#2468f2">Interactions</div>
<div class="a" style="left:804.5px;top:114px;width:5px;height:5px;border-radius:50%;background:#2468f2"></div>
<svg style="left:828px;top:111px" width="13" height="12" viewBox="0 0 13 12" fill="none" stroke="#333" stroke-width="1.1" stroke-linejoin="round"><path d="M2 0.7 H11 Q12.3 0.7 12.3 2 V7.4 Q12.3 8.7 11 8.7 H6.4 L4.2 11.2 V8.7 H2 Q0.7 8.7 0.7 7.4 V2 Q0.7 0.7 2 0.7 Z"/><path d="M3.4 3.6 H9.6 M3.4 5.8 H8" stroke-width="1"/></svg>
<div class="t" style="left:844.5px;top:110.3px;font-size:13px;letter-spacing:-0.2px;color:#444">Notes</div>
<svg style="left:903.5px;top:111px" width="12" height="12" viewBox="0 0 12 12" fill="none" stroke="#333" stroke-width="1.1"><circle cx="6" cy="6" r="5.2"/><path d="M6 0.8 V11.2 M6 3 L9.8 2.4 M6 5.4 L11 5 M6 7.8 L10.6 8 M6 10 L8.6 10.4" stroke-width="0.9"/></svg>
<div class="t" style="left:919.3px;top:110.3px;font-size:13px;letter-spacing:-0.25px;color:#444">Style</div>
<div class="a" style="left:706px;top:134px;width:259px;height:1px;background:#d8d8d8"></div>
<div class="a" style="left:721px;top:131px;width:81px;height:3px;background:#2468f2"></div>
<div class="t" style="left:720.5px;top:147.3px;font-size:15px;letter-spacing:-0.27px;color:#444">Remove Compare Listener</div>
<div class="a" style="left:706px;top:171px;width:259px;height:1px;background:#dcdcdc"></div>
<div class="t" style="left:720px;top:181.8px;font-size:10.5px;letter-spacing:0.96px;color:#999">HOT SPOT INTERACTIONS</div>
<svg style="left:929px;top:180.5px" width="14" height="14" viewBox="0 0 14 14" fill="none" stroke="#444" stroke-width="1.2"><path d="M5.6 1.2 H1.6 Q0.7 1.2 0.7 2.1 V12.4 Q0.7 13.3 1.6 13.3 H12.4 Q13.3 13.3 13.3 12.4 V8.4"/><path d="M8.4 0.9 H13.3 V5.8 M13.1 1.1 L7.2 7"/></svg>
<!-- tree -->
<div class="a" style="left:709px;top:204px;width:1.2px;height:179.5px;background:#444"></div>
<div class="a" style="left:709px;top:204px;width:11px;height:11px;background:#444"></div>
<div class="a" style="left:711.5px;top:208.7px;width:6px;height:1.6px;background:#fff"></div>
<div class="t" style="left:726px;top:203.8px;font-size:12px;font-weight:bold;letter-spacing:0.1px;color:#444">MOVED</div>
<div class="a" style="left:717px;top:226px;width:1.2px;height:157.5px;background:#a463f2"></div>
<div class="a" style="left:717px;top:226px;width:11px;height:11px;background:#a463f2"></div>
<div class="a" style="left:719.5px;top:229.7px;width:6px;height:1.6px;background:#fff"></div>
<div class="t" style="left:734px;top:226.8px;font-size:12px;font-weight:bold;letter-spacing:-0.3px;color:#444">Case 1</div>
<div class="t" style="left:734.3px;top:244px;font-size:12.5px;letter-spacing:0.2px;color:#444"><span style="color:#a463f2">If</span> "[[Item.isMarked]]" equals "true"</div>
<div class="t" style="left:741px;top:266.7px;font-size:12px;font-weight:bold;letter-spacing:-0.09px;color:#444">Unmark Rows</div>
<div class="t" style="left:748.5px;top:289px;font-size:12.5px;letter-spacing:0px;color:#444"><span style="color:#2e9e1e">ProductGridRepeater</span> this row</div>
<div class="t" style="left:741px;top:312.8px;font-size:12px;font-weight:bold;letter-spacing:-0.14px;color:#444">Fire Event</div>
<div class="t" style="left:748.3px;top:335px;font-size:12.5px;letter-spacing:0.1px;color:#444"><span style="color:#2e9e1e">(Ring Card)/(Product Card)</span> fire</div>
<div class="t" style="left:748.3px;top:349px;font-size:12.5px;letter-spacing:-0.25px;color:#444">Remove_Compare</div>
<svg style="left:741px;top:372px" width="7" height="7" viewBox="0 0 7 7" stroke="#aaa" stroke-width="1"><path d="M3.5 0 V7 M0 3.5 H7"/></svg>
<!-- new interaction -->
<div class="a" style="left:721px;top:393.3px;width:228px;height:27.3px;background:#2468f2;border-radius:3px"></div>
<div class="t" style="left:721px;top:399.6px;width:228px;text-align:center;font-size:14.5px;letter-spacing:0.33px;color:#fff">New Interaction</div>
<div class="t" style="left:705px;top:463.3px;width:260px;text-align:center;font-size:11px;letter-spacing:0.22px;color:#999">COMMON INTERACTIONS</div>
<div class="a" style="left:720px;top:486px;width:230px;height:22.5px;border:1px solid #d8d8d8;border-radius:3px"></div>
<div class="t" style="left:720px;top:491.6px;width:230px;text-align:center;font-size:12px;letter-spacing:0.1px;color:#999">Click or Tap <span class="ar">→</span> Open Link</div>
<div class="a" style="left:720px;top:517.2px;width:230px;height:22.5px;border:1px solid #d8d8d8;border-radius:3px"></div>
<div class="t" style="left:720px;top:522.7px;width:230px;text-align:center;font-size:12px;letter-spacing:0.15px;color:#999">Click or Tap <span class="ar">→</span> Set Visibility</div>
<div class="a" style="left:706px;top:600px;width:259px;height:1px;background:#dcdcdc"></div>
<div class="t" style="left:720px;top:610.2px;font-size:10.5px;letter-spacing:0.76px;color:#999">HOT SPOT PROPERTIES</div>
<div class="t" style="left:720px;top:632.3px;font-size:11px;color:#444">Tooltip</div>
<div class="a" style="left:720px;top:648px;width:230px;height:26px;background:#f2f2f2"></div>
<div class="t" style="left:726px;top:654.6px;font-size:12px;letter-spacing:-0.2px;color:#aaa">Tip</div>

<!-- repeater info popup -->
<div class="a" style="left:25px;top:606px;width:354px;height:40px;background:#fff;border-radius:2px;box-shadow:0 3px 10px rgba(0,0,0,.26),0 0 2px rgba(0,0,0,.10)"></div>
<svg style="left:44px;top:619px" width="16" height="14" viewBox="0 0 16 14" fill="none" stroke="#444" stroke-width="1.1"><rect x="0.7" y="0.8" width="14" height="12"/><path d="M0.7 4.8 H14.7 M0.7 8.8 H14.7 M7.7 0.8 V12.8"/></svg>
<div class="t" style="left:68.3px;top:618px;font-size:15.5px;font-weight:bold;letter-spacing:-0.8px;color:#4a4a4a">Repeater</div>
<div class="t" style="left:144.5px;top:621px;font-size:12px;letter-spacing:-0.19px;color:#444">12 Rows in 4 Columns</div>
<svg style="left:347px;top:617px" width="16" height="16" viewBox="0 0 16 16" fill="none" stroke="#999" stroke-width="1.1"><path d="M1 15 L6.4 9.6 M1 10.4 V15 H5.6 M15 1 L9.6 6.4 M10.4 1 H15 V5.6"/></svg>
<!-- red annotations -->
<div class="a rr" style="left:25px;top:219px;width:240px;height:33.5px"></div>
<div class="a rr" style="left:698px;top:128px;width:263px;height:275px"></div>
<div class="a rr" style="left:561px;top:421.5px;width:134px;height:143px"></div>
<svg style="left:0;top:0" width="965" height="674" viewBox="0 0 965 674"><g fill="#fa2015">
<path d="M276.8 230.6 L671 216.8 L668.4 212.6 L684.6 221.1 L668.4 229.9 L671 225.6 L276.8 231.7 Z"/>
<path d="M266.4 255.7 L282.4 256.8 L279 260.4 L580.9 483.3 L579.7 484.7 L274.4 267.4 L273.4 271 Z"/>
</g></svg>

</body>
</html>
